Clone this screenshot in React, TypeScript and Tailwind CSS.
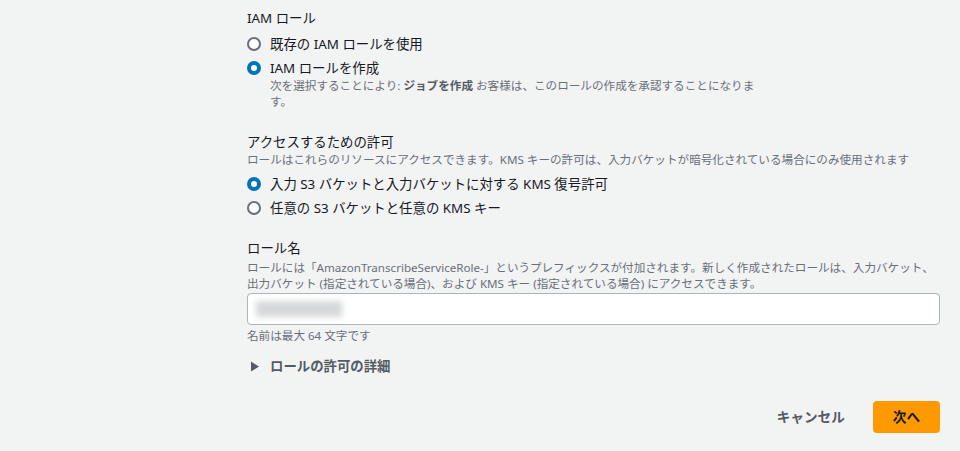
import React from 'react';

const font = { fontFamily: '"Noto Sans", "Noto Sans CJK JP", sans-serif' };

function Radio({ checked, label, children }: { checked?: boolean; label: React.ReactNode; children?: React.ReactNode }) {
  return (
    <div className="flex items-start py-0.5">
      <span
        className={
          checked
            ? 'mt-[3px] h-[14px] w-[14px] shrink-0 rounded-full border-[4px] border-[#0073bb] bg-white'
            : 'mt-[3px] h-[14px] w-[14px] shrink-0 rounded-full border-2 border-[#687078] bg-white'
        }
      />
      <div className="ml-[9px]">
        <div className="text-[13.4px] leading-5 text-[#16191f]">{label}</div>
        {children}
      </div>
    </div>
  );
}

export default function App() {
  return (
    <div className="min-h-screen w-full bg-[#f2f3f3]" style={font}>
      <div className="ml-[247px] w-[693px] pt-2">
        <h3 className="text-[13.4px] leading-5 text-[#16191f]">IAM ロール</h3>
        <div className="mt-1">
          <Radio label="既存の IAM ロールを使用" />
          <Radio checked label="IAM ロールを作成">
            <p className="max-w-[492px] text-[11.6px] leading-4 text-[#687078]">
              次を選択することにより: <span className="font-bold text-[#545b64]">ジョブを作成</span> お客様は、このロールの作成を承認することになります。
            </p>
          </Radio>
        </div>

        <h3 className="mt-5 text-[13.4px] leading-5 text-[#16191f]">アクセスするための許可</h3>
        <p className="text-[11.6px] leading-4 text-[#687078]">
          ロールはこれらのリソースにアクセスできます。KMS キーの許可は、入力バケットが暗号化されている場合にのみ使用されます
        </p>
        <div className="mt-1">
          <Radio checked label="入力 S3 バケットと入力バケットに対する KMS 復号許可" />
          <Radio label="任意の S3 バケットと任意の KMS キー" />
        </div>

        <h3 className="mt-[18px] text-[13.4px] leading-5 text-[#16191f]">ロール名</h3>
        <p className="mt-[2px] text-[11.6px] leading-4 text-[#687078]">
          ロールには「AmazonTranscribeServiceRole-」というプレフィックスが付加されます。新しく作成されたロールは、入力バケット、出力バケット (指定されている場合)、および KMS キー (指定されている場合) にアクセスできます。
        </p>
        <div className="mt-px flex h-8 items-center rounded-sm border border-[#aab7b8] bg-white px-2">
          <div className="h-4 w-[86px] bg-[#d5d8d8] blur-[3px]" />
        </div>
        <p className="mt-[3px] text-[11.6px] leading-4 text-[#687078]">名前は最大 64 文字です</p>

        <div className="mt-3 flex items-center text-[13.4px] font-bold leading-5 text-[#545b64]">
          <svg width="10" height="11" viewBox="0 0 10 11" className="ml-[3px] mr-2.5">
            <path d="M1 0.5 L9 5.5 L1 10.5 Z" fill="#545b64" />
          </svg>
          ロールの許可の詳細
        </div>

        <div className="mt-[25px] flex items-center justify-end gap-2">
          <button className="h-8 px-5 text-[13.6px] font-bold text-[#545b64]">キャンセル</button>
          <button className="h-8 rounded-sm bg-[#ff9900] px-5 text-[13.6px] font-bold text-[#16191f]">次へ</button>
        </div>
      </div>
    </div>
  );
}
